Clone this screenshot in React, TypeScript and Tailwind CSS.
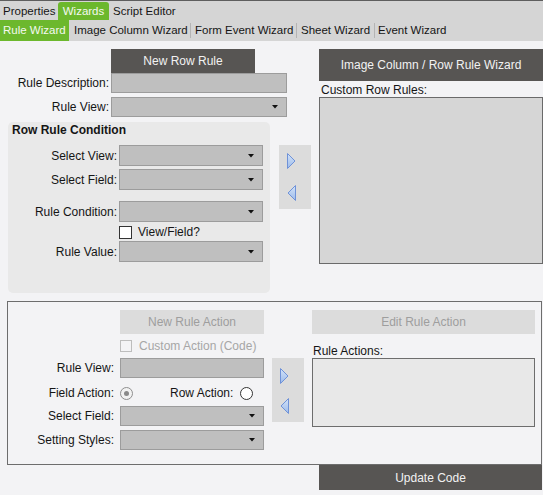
import React from "react";

const Arrow = ({ dir }: { dir: "right" | "left" }) => (
  <svg width="9" height="16" viewBox="0 0 9 16">
    <defs>
      <linearGradient id={`g-${dir}`} x1="0" y1="0" x2="0" y2="1">
        <stop offset="0" stopColor="#d3e3f8" />
        <stop offset="1" stopColor="#9dbbea" />
      </linearGradient>
    </defs>
    {dir === "right" ? (
      <polygon points="0.5,0.5 8,8 0.5,15.5" fill={`url(#g-${dir})`} stroke="#6f92d8" strokeWidth="1" />
    ) : (
      <polygon points="8.5,0.5 1,8 8.5,15.5" fill={`url(#g-${dir})`} stroke="#6f92d8" strokeWidth="1" />
    )}
  </svg>
);

const Caret = () => (
  <svg width="6" height="4" viewBox="0 0 6 4">
    <polygon points="0,0 6,0 3,3.5" fill="#111" />
  </svg>
);

const Select = ({ w, h = 21 }: { w: string; h?: number }) => (
  <div
    className={`${w} ${h === 21 ? "h-[21px]" : "h-[20px]"} bg-[#bfbfbf] border border-[#9c9c9c] flex items-center justify-end pr-[8px]`}
  >
    <Caret />
  </div>
);

const Input = ({ w }: { w: string }) => (
  <div className={`${w} h-[20px] bg-[#bfbfbf] border border-[#9c9c9c]`} />
);

const Label = ({ w, children }: { w: string; children: React.ReactNode }) => (
  <div className={`${w} text-right text-[#151515] leading-[14px] whitespace-nowrap`}>{children}</div>
);

export default function App() {
  return (
    <div className="w-[543px] h-[495px] bg-[#f3f3f5] font-['Liberation_Sans',Arial,sans-serif] text-[12px] text-[#151515] overflow-hidden">
      {/* Tab row 1 */}
      <div className="h-[20px] bg-[#d5d5d5] border-t border-[#5e5e5e] flex items-end whitespace-nowrap text-[11.5px]">
        <div className="w-[58px] h-[19px] pl-[3px] pt-[1px] leading-[18px]">Properties</div>
        <div className="w-[51px] h-[18px] bg-[#6cb82d] rounded-t-[3px] text-center text-[#f4f8f0] leading-[18px]">
          Wizards
        </div>
        <div className="h-[19px] pl-[4px] pt-[1px] leading-[18px]">Script Editor</div>
      </div>
      {/* Tab row 2 */}
      <div className="h-[21px] bg-[#d5d5d5] flex items-stretch whitespace-nowrap text-[11.5px]">
        <div className="w-[69px] shrink-0 bg-[#6cb82d] pl-[3px] text-[#f4f8f0] leading-[21px]">Rule Wizard</div>
        <div className="w-[121px] shrink-0 pl-[5px] leading-[21px]">Image Column Wizard</div>
        <div className="w-px shrink-0 bg-[#b4b4b4] my-[3px]" />
        <div className="w-[105px] shrink-0 pl-[4px] leading-[21px]">Form Event Wizard</div>
        <div className="w-px shrink-0 bg-[#b4b4b4] my-[3px]" />
        <div className="w-[77px] shrink-0 pl-[4px] leading-[21px]">Sheet Wizard</div>
        <div className="w-px shrink-0 bg-[#b4b4b4] my-[3px]" />
        <div className="pl-[3px] leading-[21px]">Event Wizard</div>
      </div>

      {/* Top section */}
      <div className="flex pt-[8px]">
        <div className="w-[311px] flex flex-col">
          <div className="ml-[111px] w-[144px] h-[24px] bg-[#575553] text-[#f2f2f2] flex items-center justify-center">
            New Row Rule
          </div>
          <div className="flex items-center">
            <Label w="w-[109px]">Rule Description:</Label>
            <div className="ml-[2px]">
              <Input w="w-[176px]" />
            </div>
          </div>
          <div className="flex items-center mt-[4px]">
            <Label w="w-[109px]">Rule View:</Label>
            <div className="ml-[2px]">
              <Select w="w-[176px]" h={20} />
            </div>
          </div>
          <div className="flex mt-[5px]">
            <div className="ml-[8px] w-[262px] h-[171px] bg-[#e9e9e9] rounded-[5px] flex flex-col">
              <div className="mt-[1px] pl-[4px] font-bold leading-[14px]">Row Rule Condition</div>
              <div className="flex items-center mt-[8px]">
                <Label w="w-[109px]">Select View:</Label>
                <div className="ml-[2px]">
                  <Select w="w-[144px]" />
                </div>
              </div>
              <div className="flex items-center mt-[3px]">
                <Label w="w-[109px]">Select Field:</Label>
                <div className="ml-[2px]">
                  <Select w="w-[144px]" />
                </div>
              </div>
              <div className="flex items-center mt-[11px]">
                <Label w="w-[109px]">Rule Condition:</Label>
                <div className="ml-[2px]">
                  <Select w="w-[144px]" />
                </div>
              </div>
              <div className="flex items-center mt-[3px] h-[14px] pl-[111px]">
                <div className="w-[13px] h-[13px] bg-white border border-[#333]" />
                <span className="ml-[6px] leading-[14px]">View/Field?</span>
              </div>
              <div className="flex items-center mt-[2px]">
                <Label w="w-[109px]">Rule Value:</Label>
                <div className="ml-[2px]">
                  <Select w="w-[144px]" />
                </div>
              </div>
            </div>
            <div className="ml-[9px] mt-[23px] w-[32px] h-[64px] bg-[#dcdcdc] flex flex-col items-start pl-[8px]">
              <div className="mt-[8px]">
                <Arrow dir="right" />
              </div>
              <div className="mt-[16px]">
                <Arrow dir="left" />
              </div>
            </div>
          </div>
        </div>

        <div className="ml-[8px] w-[224px] flex flex-col">
          <div className="h-[32px] w-[224px] bg-[#575553] text-[#f2f2f2] flex items-center justify-center">
            Image Column / Row Rule Wizard
          </div>
          <div className="h-[16px] flex items-end pl-[2px] leading-[14px]">Custom Row Rules:</div>
          <div className="h-[167px] w-[224px] bg-[#d6d6d6] border border-[#6a6a6a]" />
        </div>
      </div>

      {/* Bottom panel */}
      <div className="mt-[8px] ml-[7px] w-[535px] h-[164px] border border-[#6d6d6d] flex">
        <div className="w-[296px] flex flex-col">
          <div className="ml-[112px] mt-[8px] w-[144px] h-[24px] bg-[#dcdcdc] text-[#9e9e9e] flex items-center justify-center">
            New Rule Action
          </div>
          <div className="h-[24px] flex items-center pl-[112px]">
            <div className="w-[12px] h-[12px] border border-[#bdbdbd]" />
            <span className="ml-[7px] text-[#a6a6a6] leading-[14px]">Custom Action (Code)</span>
          </div>
          <div className="flex">
            <div className="w-[256px] flex flex-col">
              <div className="flex items-center">
                <Label w="w-[106px]">Rule View:</Label>
                <div className="ml-[6px]">
                  <Input w="w-[144px]" />
                </div>
              </div>
              <div className="flex items-center mt-[5px] h-[20px]">
                <Label w="w-[106px]">Field Action:</Label>
                <div className="ml-[6px] w-[13px] h-[13px] rounded-full border border-[#8f8f8f] bg-[#f2f2f2] flex items-center justify-center">
                  <div className="w-[5px] h-[5px] rounded-full bg-[#8a8a8a]" />
                </div>
                <span className="ml-[37px] leading-[14px]">Row Action:</span>
                <div className="ml-[7px] w-[13px] h-[13px] rounded-full border border-[#333] bg-white" />
              </div>
              <div className="flex items-center mt-[3px]">
                <Label w="w-[106px]">Select Field:</Label>
                <div className="ml-[6px]">
                  <Select w="w-[144px]" h={20} />
                </div>
              </div>
              <div className="flex items-center mt-[4px]">
                <Label w="w-[106px]">Setting Styles:</Label>
                <div className="ml-[6px]">
                  <Select w="w-[144px]" h={20} />
                </div>
              </div>
            </div>
            <div className="ml-[8px] w-[32px] h-[64px] bg-[#dcdcdc] flex flex-col items-start pl-[8px]">
              <div className="mt-[10px]">
                <Arrow dir="right" />
              </div>
              <div className="mt-[14px]">
                <Arrow dir="left" />
              </div>
            </div>
          </div>
        </div>
        <div className="ml-[8px] w-[223px] flex flex-col">
          <div className="mt-[8px] h-[24px] bg-[#dcdcdc] text-[#9e9e9e] flex items-center justify-center">
            Edit Rule Action
          </div>
          <div className="h-[24px] flex items-end pl-[1px] leading-[14px]">Rule Actions:</div>
          <div className="h-[69px] bg-[#e8e8e8] border border-[#6d6d6d]" />
        </div>
      </div>

      <div className="ml-[319px] w-[223px] h-[25px] bg-[#575553] text-[#f2f2f2] flex items-center justify-center">
        Update Code
      </div>
    </div>
  );
}
